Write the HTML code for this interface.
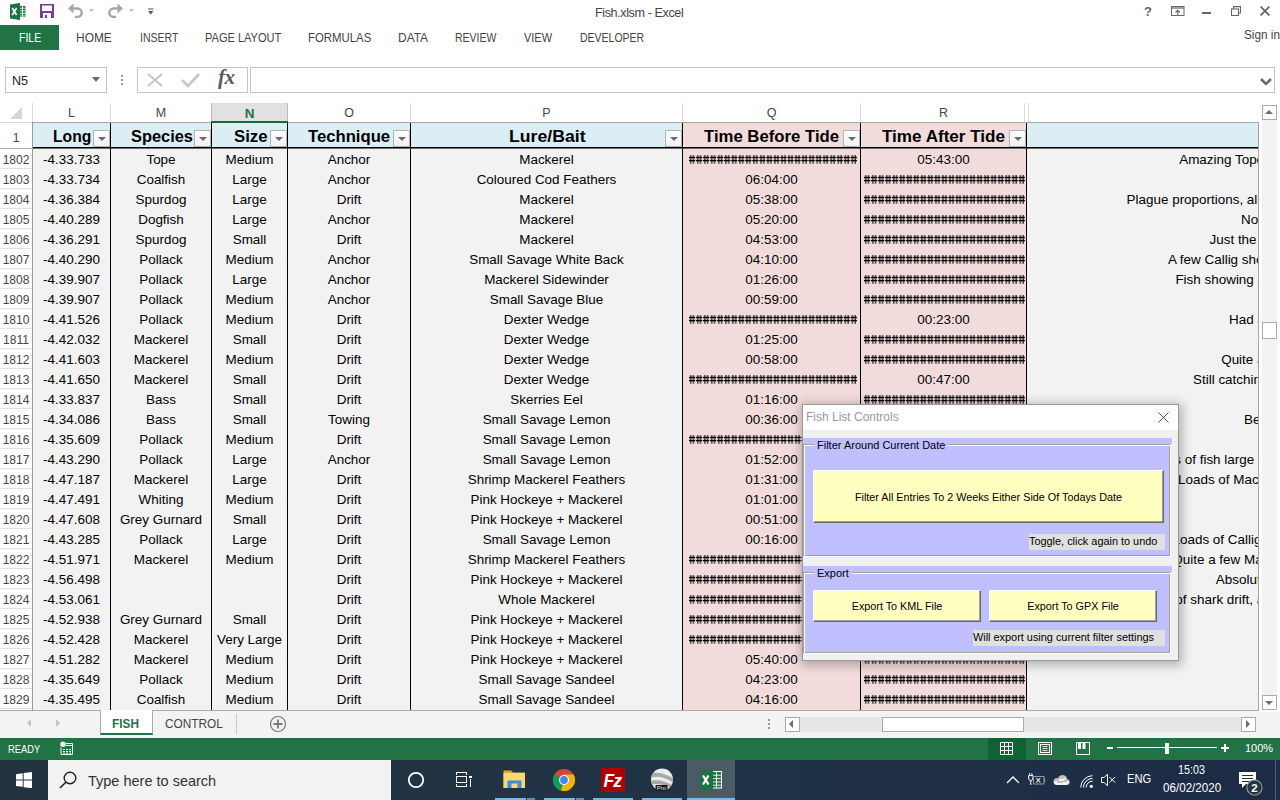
<!DOCTYPE html>
<html><head><meta charset="utf-8">
<style>
*{margin:0;padding:0;box-sizing:border-box}
html,body{width:1280px;height:800px;overflow:hidden;background:#fff;font-family:"Liberation Sans",sans-serif;position:relative}
.a{position:absolute}
/* title bar */
.tt{position:absolute;top:5.5px;left:595px;font-size:12.6px;letter-spacing:-0.4px;color:#444;white-space:nowrap}
.tab{position:absolute;top:31px;font-size:12.2px;color:#444;white-space:nowrap;transform-origin:0 0}
/* grid */
.rh{position:absolute;left:0;width:32px;height:20px;border-bottom:1px solid #e1e1e1;font-size:12px;color:#444;text-align:center;line-height:23px}
.c{position:absolute;height:20px;line-height:22px;font-size:13.45px;color:#000;text-align:center;white-space:nowrap;overflow:hidden}
.c.hash{font-size:13.45px;letter-spacing:-1.5px}
.c.s{left:1027px;width:231px;text-align:left}
.vb{position:absolute;top:123px;height:587px;width:1px;background:#000}
.hd{position:absolute;top:125px;height:24px;line-height:24px;font-weight:bold;font-size:16px;transform-origin:0 0;color:#000;white-space:nowrap}
.fb{position:absolute;top:130px;width:17px;height:17px;border:1px solid #b4b4b8;background:linear-gradient(#fdfdfd,#f0f0f4)}
.fb:after{content:"";position:absolute;left:4px;top:6px;border-left:4px solid transparent;border-right:4px solid transparent;border-top:4.5px solid #6b6b6b}
.ch{position:absolute;top:104px;height:19px;line-height:19px;font-size:12.5px;color:#444;text-align:center}
.cs{position:absolute;top:103px;height:19px;width:1px;background:#dcdcdc}
/* dialog */
.dlg{position:absolute;left:802px;top:404px;width:377px;height:257px;background:#f0f0f0;border:1px solid #9a9a9a;box-shadow:1px 2px 10px 2px rgba(0,0,0,0.28)}
.frame{position:absolute;background:#c0c0ff}
.gb{position:absolute;border-top:1px solid #a0a0a0;border-left:1px solid #a0a0a0;border-right:1px solid #fff;border-bottom:1px solid #fff;box-shadow:inset 1px 1px 0 #fff, inset -1px -1px 0 #a0a0a0}
.gl{position:absolute;background:#c0c0ff;font-size:11px;color:#000;padding:0 3px;line-height:13px}
.btn{position:absolute;background:#ffffc0;border-top:1px solid #fff;border-left:1px solid #fff;border-right:1px solid #696969;border-bottom:1px solid #696969;box-shadow:inset -1px -1px 0 #a0a0a0;font-size:10.8px;color:#000;text-align:center;white-space:nowrap}
.lbl{position:absolute;background:#e0e0e0;font-size:10.9px;color:#000;white-space:nowrap;line-height:15px}
</style></head><body>
<svg width="0" height="0" style="position:absolute"><defs><pattern id="hp" patternUnits="userSpaceOnUse" width="7.03" height="9"><rect x="0" y="1.8" width="6.3" height="1.4" fill="#000"/><rect x="0" y="4.9" width="6.3" height="1.4" fill="#000"/><rect x="1.2" y="0" width="1" height="8.8" fill="#000"/><rect x="4" y="0" width="1" height="8.8" fill="#000"/></pattern></defs></svg>

<!-- ===== TITLE BAR ===== -->
<svg class="a" style="left:10px;top:3px" width="17" height="17" viewBox="0 0 17 17">
  <rect x="9.5" y="2.5" width="6.5" height="12" fill="#1e7145" stroke="#fff" stroke-width="0.9"/>
  <path d="M10 5.2h6M10 7.8h6M10 10.4h6M10 13h6M12.5 3v11.5" stroke="#fff" stroke-width="0.8"/>
  <path d="M0 1.5 L10 0 L10 17 L0 15.5 Z" fill="#1e7145"/>
  <path d="M2.2 5 L6.6 12 M6.6 5 L2.2 12" stroke="#fff" stroke-width="1.7"/>
</svg>
<svg class="a" style="left:40px;top:4px" width="14" height="14" viewBox="0 0 14 14">
  <path d="M0 0 H14 V14 H0 Z" fill="#7d3c98"/>
  <rect x="2" y="1.5" width="10" height="5.5" fill="#fff"/>
  <rect x="3" y="9" width="8" height="5" fill="#fff"/>
  <rect x="5" y="11" width="2" height="3" fill="#7d3c98"/>
</svg>
<svg class="a" style="left:68px;top:3px" width="30" height="16" viewBox="0 0 30 16">
  <path d="M4 5.5 H9.5 A4.2 4.2 0 0 1 9.5 13.9 H7" fill="none" stroke="#a6a6ab" stroke-width="2.4"/>
  <path d="M0 5.5 L5.5 0.5 L5.5 10.5 Z" fill="#a6a6ab"/>
  <path d="M21 6 L26 6 L23.5 9 Z" fill="#c0c0c4"/>
</svg>
<svg class="a" style="left:108px;top:3px" width="30" height="16" viewBox="0 0 30 16">
  <path d="M11 5.5 H5.5 A4.2 4.2 0 0 0 5.5 13.9 H8" fill="none" stroke="#a6a6ab" stroke-width="2.4"/>
  <path d="M15 5.5 L9.5 0.5 L9.5 10.5 Z" fill="#a6a6ab"/>
  <path d="M21 6 L26 6 L23.5 9 Z" fill="#c0c0c4"/>
</svg>
<svg class="a" style="left:148px;top:8px" width="8" height="8" viewBox="0 0 8 8">
  <rect x="0" y="0.5" width="5.5" height="1" fill="#555"/>
  <path d="M0 3 L5.5 3 L2.75 6.5 Z" fill="#555"/>
</svg>
<div class="tt">Fish.xlsm - Excel</div>
<div class="a" style="left:1144px;top:4px;font-size:13px;font-weight:bold;color:#666">?</div>
<svg class="a" style="left:1171px;top:6px" width="14" height="10" viewBox="0 0 14 10">
  <rect x="0.5" y="0.5" width="12.5" height="9" fill="none" stroke="#666"/>
  <path d="M0.5 2 H13" stroke="#666" stroke-width="1.2"/>
  <path d="M6.75 9 V4.5 M4.5 6.5 L6.75 4.2 L9 6.5" fill="none" stroke="#666" stroke-width="1.1"/>
</svg>
<div class="a" style="left:1202px;top:12px;width:9px;height:2px;background:#666"></div>
<svg class="a" style="left:1231px;top:6px" width="10" height="10" viewBox="0 0 10 10">
  <rect x="0.5" y="3" width="7" height="6.5" fill="none" stroke="#666" stroke-width="1.1"/>
  <path d="M2.5 3 V0.6 H9.5 V7 H7.5" fill="none" stroke="#666" stroke-width="1.1"/>
</svg>
<svg class="a" style="left:1260px;top:6px" width="10" height="10" viewBox="0 0 10 10">
  <path d="M0.6 0.6 L9.4 9.4 M9.4 0.6 L0.6 9.4" stroke="#666" stroke-width="1.8"/>
</svg>

<!-- ===== RIBBON TABS ===== -->
<div class="a" style="left:0;top:25px;width:59px;height:25px;background:#217346"></div>
<div class="a" style="left:19px;top:31px;color:#fff;font-size:12.2px;transform:scaleX(0.86);transform-origin:0 0">FILE</div>
<div class="tab" style="left:76px;transform:scaleX(0.98)">HOME</div>
<div class="tab" style="left:140px;transform:scaleX(0.863)">INSERT</div>
<div class="tab" style="left:205px;transform:scaleX(0.905)">PAGE LAYOUT</div>
<div class="tab" style="left:308px;transform:scaleX(0.935)">FORMULAS</div>
<div class="tab" style="left:398px;transform:scaleX(0.98)">DATA</div>
<div class="tab" style="left:455px;transform:scaleX(0.86)">REVIEW</div>
<div class="tab" style="left:523.5px;transform:scaleX(0.9)">VIEW</div>
<div class="tab" style="left:580px;transform:scaleX(0.861)">DEVELOPER</div>
<div class="a" style="left:1244px;top:28px;font-size:12.5px;color:#444;white-space:nowrap;transform:scaleX(0.94);transform-origin:0 0">Sign in</div>

<!-- ===== FORMULA BAR ===== -->
<div class="a" style="left:5px;top:67px;width:102px;height:26px;border:1px solid #c6c6c6;background:#fff"></div>
<div class="a" style="left:12px;top:74px;font-size:12.5px;color:#222">N5</div>
<div class="a" style="left:92px;top:77px;border-left:4px solid transparent;border-right:4px solid transparent;border-top:5px solid #6b6b6b"></div>
<div class="a" style="left:121px;top:75px;width:2px;height:2px;background:#999"></div>
<div class="a" style="left:121px;top:79px;width:2px;height:2px;background:#999"></div>
<div class="a" style="left:121px;top:83px;width:2px;height:2px;background:#999"></div>
<div class="a" style="left:137px;top:67px;width:111px;height:26px;border:1px solid #c6c6c6;background:#fff"></div>
<svg class="a" style="left:146px;top:72px" width="20" height="16" viewBox="0 0 20 16">
  <path d="M2 2 L16 14 M16 2 L2 14" stroke="#c8c8c8" stroke-width="2.2"/>
</svg>
<svg class="a" style="left:181px;top:72px" width="20" height="16" viewBox="0 0 20 16">
  <path d="M1 8 L7 14 L18 2" fill="none" stroke="#c8c8c8" stroke-width="2.6"/>
</svg>
<div class="a" style="left:218px;top:65px;font-family:'Liberation Serif',serif;font-style:italic;font-weight:bold;font-size:21px;color:#5a5a5a;letter-spacing:-0.5px">fx</div>
<div class="a" style="left:250px;top:67px;width:1025px;height:26px;border:1px solid #c6c6c6;background:#fff"></div>
<svg class="a" style="left:1260px;top:77.5px" width="12" height="9" viewBox="0 0 12 9">
  <path d="M1 1 L6 6 L11 1" fill="none" stroke="#6b6b6b" stroke-width="2.6"/>
</svg>

<!-- ===== COLUMN HEADERS ===== -->
<svg class="a" style="left:0;top:103px" width="33" height="20">
  <path d="M22 4 L22 16 L10 16 Z" fill="#d6d6d6"/>
</svg>
<div class="a" style="left:212px;top:103px;width:75px;height:19px;background:#e1e1e1"></div>
<div class="cs" style="left:32px"></div>
<div class="cs" style="left:110px"></div>
<div class="cs" style="left:211px;background:#bdbdbd"></div>
<div class="cs" style="left:287px;background:#bdbdbd"></div>
<div class="cs" style="left:410px"></div>
<div class="cs" style="left:682px"></div>
<div class="cs" style="left:860px"></div>
<div class="cs" style="left:1024px"></div>
<div class="cs" style="left:1028px"></div>
<div class="ch" style="left:33px;width:77px">L</div>
<div class="ch" style="left:111px;width:100px">M</div>
<div class="ch" style="left:212px;width:75px;color:#217346;font-weight:bold;font-size:13.5px">N</div>
<div class="ch" style="left:288px;width:122px">O</div>
<div class="ch" style="left:411px;width:271px">P</div>
<div class="ch" style="left:683px;width:177px">Q</div>
<div class="ch" style="left:861px;width:165px">R</div>
<div class="a" style="left:0;top:122px;width:32px;height:1px;background:#dadada"></div>
<div class="a" style="left:32px;top:122px;width:1227px;height:1px;background:#a6a6a6"></div>
<div class="a" style="left:211px;top:121px;width:77px;height:2px;background:#146c3a"></div>

<!-- ===== GRID ===== -->
<div class="a" style="left:0;top:123px;width:32px;height:587px;background:#fff"></div>
<div class="rh" style="top:123px;height:26px;line-height:30px;border-bottom:1px solid #ababab">1</div>
<div class="a" style="left:32px;top:122px;width:1px;height:588px;background:#9b9b9b"></div>
<div class="a" style="left:33px;top:123px;width:1225px;height:24px;background:#daeef3"></div>
<div class="a" style="left:683px;top:123px;width:343px;height:587px;background:#f2dcdb"></div>
<div class="a" style="left:33px;top:149px;width:650px;height:561px;background:#f2f2f2"></div>
<div class="a" style="left:1027px;top:149px;width:231px;height:561px;background:#f2f2f2"></div>
<div class="a" style="left:33px;top:147px;width:1225px;height:1px;background:#000"></div>
<div class="a" style="left:33px;top:148px;width:1225px;height:1px;background:#6a6a6a"></div>
<div class="a" style="left:1258px;top:123px;width:1px;height:587px;background:#a6a6a6"></div>
<div class="vb" style="left:110px"></div>
<div class="vb" style="left:211px"></div>
<div class="vb" style="left:287px"></div>
<div class="vb" style="left:410px"></div>
<div class="vb" style="left:682px"></div>
<div class="vb" style="left:860px"></div>
<div class="vb" style="left:1026px"></div>
<div class="hd" style="left:52.8px;transform:scaleX(0.98)">Long</div>
<div class="fb" style="left:93px"></div>
<div class="hd" style="left:130.5px;transform:scaleX(1.024)">Species</div>
<div class="fb" style="left:194px"></div>
<div class="hd" style="left:233.8px;transform:scaleX(1.048)">Size</div>
<div class="fb" style="left:270px"></div>
<div class="hd" style="left:307.9px;transform:scaleX(1.042)">Technique</div>
<div class="fb" style="left:393px"></div>
<div class="hd" style="left:509.3px;transform:scaleX(1.104)">Lure/Bait</div>
<div class="fb" style="left:665px"></div>
<div class="hd" style="left:704.0px;transform:scaleX(1.045)">Time Before Tide</div>
<div class="fb" style="left:843px"></div>
<div class="hd" style="left:881.6px;transform:scaleX(1.067)">Time After Tide</div>
<div class="fb" style="left:1009px"></div>
<div class="rh" style="top:149px">1802</div>
<div class="c" style="top:149px;left:33px;width:77px">-4.33.733</div>
<div class="c" style="top:149px;left:111px;width:100px">Tope</div>
<div class="c" style="top:149px;left:212px;width:75px">Medium</div>
<div class="c" style="top:149px;left:288px;width:122px">Anchor</div>
<div class="c" style="top:149px;left:411px;width:271px">Mackerel</div>
<svg class="a" style="left:688.6px;top:154.8px" width="168.0" height="9"><rect width="168.0" height="9" fill="url(#hp)"/></svg>
<div class="c" style="top:149px;left:861px;width:165px">05:43:00</div>
<div class="c s" style="top:149px"><span style="position:absolute;left:152.2px">Amazing Tope</span></div>
<div class="rh" style="top:169px">1803</div>
<div class="c" style="top:169px;left:33px;width:77px">-4.33.734</div>
<div class="c" style="top:169px;left:111px;width:100px">Coalfish</div>
<div class="c" style="top:169px;left:212px;width:75px">Large</div>
<div class="c" style="top:169px;left:288px;width:122px">Anchor</div>
<div class="c" style="top:169px;left:411px;width:271px">Coloured Cod Feathers</div>
<div class="c" style="top:169px;left:683px;width:177px">06:04:00</div>
<svg class="a" style="left:863.7px;top:174.8px" width="161.0" height="9"><rect width="161.0" height="9" fill="url(#hp)"/></svg>
<div class="rh" style="top:189px">1804</div>
<div class="c" style="top:189px;left:33px;width:77px">-4.36.384</div>
<div class="c" style="top:189px;left:111px;width:100px">Spurdog</div>
<div class="c" style="top:189px;left:212px;width:75px">Large</div>
<div class="c" style="top:189px;left:288px;width:122px">Drift</div>
<div class="c" style="top:189px;left:411px;width:271px">Mackerel</div>
<div class="c" style="top:189px;left:683px;width:177px">05:38:00</div>
<svg class="a" style="left:863.7px;top:194.8px" width="161.0" height="9"><rect width="161.0" height="9" fill="url(#hp)"/></svg>
<div class="c s" style="top:189px"><span style="position:absolute;left:99.6px">Plague proportions, all</span></div>
<div class="rh" style="top:209px">1805</div>
<div class="c" style="top:209px;left:33px;width:77px">-4.40.289</div>
<div class="c" style="top:209px;left:111px;width:100px">Dogfish</div>
<div class="c" style="top:209px;left:212px;width:75px">Large</div>
<div class="c" style="top:209px;left:288px;width:122px">Anchor</div>
<div class="c" style="top:209px;left:411px;width:271px">Mackerel</div>
<div class="c" style="top:209px;left:683px;width:177px">05:20:00</div>
<svg class="a" style="left:863.7px;top:214.8px" width="161.0" height="9"><rect width="161.0" height="9" fill="url(#hp)"/></svg>
<div class="c s" style="top:209px"><span style="position:absolute;left:214.1px">Not</span></div>
<div class="rh" style="top:229px">1806</div>
<div class="c" style="top:229px;left:33px;width:77px">-4.36.291</div>
<div class="c" style="top:229px;left:111px;width:100px">Spurdog</div>
<div class="c" style="top:229px;left:212px;width:75px">Small</div>
<div class="c" style="top:229px;left:288px;width:122px">Drift</div>
<div class="c" style="top:229px;left:411px;width:271px">Mackerel</div>
<div class="c" style="top:229px;left:683px;width:177px">04:53:00</div>
<svg class="a" style="left:863.7px;top:234.8px" width="161.0" height="9"><rect width="161.0" height="9" fill="url(#hp)"/></svg>
<div class="c s" style="top:229px"><span style="position:absolute;left:182.5px">Just the </span></div>
<div class="rh" style="top:249px">1807</div>
<div class="c" style="top:249px;left:33px;width:77px">-4.40.290</div>
<div class="c" style="top:249px;left:111px;width:100px">Pollack</div>
<div class="c" style="top:249px;left:212px;width:75px">Medium</div>
<div class="c" style="top:249px;left:288px;width:122px">Anchor</div>
<div class="c" style="top:249px;left:411px;width:271px">Small Savage White Back</div>
<div class="c" style="top:249px;left:683px;width:177px">04:10:00</div>
<svg class="a" style="left:863.7px;top:254.8px" width="161.0" height="9"><rect width="161.0" height="9" fill="url(#hp)"/></svg>
<div class="c s" style="top:249px"><span style="position:absolute;left:140.9px">A few Callig shoals</span></div>
<div class="rh" style="top:269px">1808</div>
<div class="c" style="top:269px;left:33px;width:77px">-4.39.907</div>
<div class="c" style="top:269px;left:111px;width:100px">Pollack</div>
<div class="c" style="top:269px;left:212px;width:75px">Large</div>
<div class="c" style="top:269px;left:288px;width:122px">Anchor</div>
<div class="c" style="top:269px;left:411px;width:271px">Mackerel Sidewinder</div>
<div class="c" style="top:269px;left:683px;width:177px">01:26:00</div>
<svg class="a" style="left:863.7px;top:274.8px" width="161.0" height="9"><rect width="161.0" height="9" fill="url(#hp)"/></svg>
<div class="c s" style="top:269px"><span style="position:absolute;left:148.4px">Fish showing </span></div>
<div class="rh" style="top:289px">1809</div>
<div class="c" style="top:289px;left:33px;width:77px">-4.39.907</div>
<div class="c" style="top:289px;left:111px;width:100px">Pollack</div>
<div class="c" style="top:289px;left:212px;width:75px">Medium</div>
<div class="c" style="top:289px;left:288px;width:122px">Anchor</div>
<div class="c" style="top:289px;left:411px;width:271px">Small Savage Blue</div>
<div class="c" style="top:289px;left:683px;width:177px">00:59:00</div>
<svg class="a" style="left:863.7px;top:294.8px" width="161.0" height="9"><rect width="161.0" height="9" fill="url(#hp)"/></svg>
<div class="rh" style="top:309px">1810</div>
<div class="c" style="top:309px;left:33px;width:77px">-4.41.526</div>
<div class="c" style="top:309px;left:111px;width:100px">Pollack</div>
<div class="c" style="top:309px;left:212px;width:75px">Medium</div>
<div class="c" style="top:309px;left:288px;width:122px">Drift</div>
<div class="c" style="top:309px;left:411px;width:271px">Dexter Wedge</div>
<svg class="a" style="left:688.6px;top:314.8px" width="168.0" height="9"><rect width="168.0" height="9" fill="url(#hp)"/></svg>
<div class="c" style="top:309px;left:861px;width:165px">00:23:00</div>
<div class="c s" style="top:309px"><span style="position:absolute;left:202.1px">Had a</span></div>
<div class="rh" style="top:329px">1811</div>
<div class="c" style="top:329px;left:33px;width:77px">-4.42.032</div>
<div class="c" style="top:329px;left:111px;width:100px">Mackerel</div>
<div class="c" style="top:329px;left:212px;width:75px">Small</div>
<div class="c" style="top:329px;left:288px;width:122px">Drift</div>
<div class="c" style="top:329px;left:411px;width:271px">Dexter Wedge</div>
<div class="c" style="top:329px;left:683px;width:177px">01:25:00</div>
<svg class="a" style="left:863.7px;top:334.8px" width="161.0" height="9"><rect width="161.0" height="9" fill="url(#hp)"/></svg>
<div class="rh" style="top:349px">1812</div>
<div class="c" style="top:349px;left:33px;width:77px">-4.41.603</div>
<div class="c" style="top:349px;left:111px;width:100px">Mackerel</div>
<div class="c" style="top:349px;left:212px;width:75px">Medium</div>
<div class="c" style="top:349px;left:288px;width:122px">Drift</div>
<div class="c" style="top:349px;left:411px;width:271px">Dexter Wedge</div>
<div class="c" style="top:349px;left:683px;width:177px">00:58:00</div>
<svg class="a" style="left:863.7px;top:354.8px" width="161.0" height="9"><rect width="161.0" height="9" fill="url(#hp)"/></svg>
<div class="c s" style="top:349px"><span style="position:absolute;left:194.2px">Quite a</span></div>
<div class="rh" style="top:369px">1813</div>
<div class="c" style="top:369px;left:33px;width:77px">-4.41.650</div>
<div class="c" style="top:369px;left:111px;width:100px">Mackerel</div>
<div class="c" style="top:369px;left:212px;width:75px">Small</div>
<div class="c" style="top:369px;left:288px;width:122px">Drift</div>
<div class="c" style="top:369px;left:411px;width:271px">Dexter Wedge</div>
<svg class="a" style="left:688.6px;top:374.8px" width="168.0" height="9"><rect width="168.0" height="9" fill="url(#hp)"/></svg>
<div class="c" style="top:369px;left:861px;width:165px">00:47:00</div>
<div class="c s" style="top:369px"><span style="position:absolute;left:166.0px">Still catching</span></div>
<div class="rh" style="top:389px">1814</div>
<div class="c" style="top:389px;left:33px;width:77px">-4.33.837</div>
<div class="c" style="top:389px;left:111px;width:100px">Bass</div>
<div class="c" style="top:389px;left:212px;width:75px">Small</div>
<div class="c" style="top:389px;left:288px;width:122px">Drift</div>
<div class="c" style="top:389px;left:411px;width:271px">Skerries Eel</div>
<div class="c" style="top:389px;left:683px;width:177px">01:16:00</div>
<svg class="a" style="left:863.7px;top:394.8px" width="161.0" height="9"><rect width="161.0" height="9" fill="url(#hp)"/></svg>
<div class="rh" style="top:409px">1815</div>
<div class="c" style="top:409px;left:33px;width:77px">-4.34.086</div>
<div class="c" style="top:409px;left:111px;width:100px">Bass</div>
<div class="c" style="top:409px;left:212px;width:75px">Small</div>
<div class="c" style="top:409px;left:288px;width:122px">Towing</div>
<div class="c" style="top:409px;left:411px;width:271px">Small Savage Lemon</div>
<div class="c" style="top:409px;left:683px;width:177px">00:36:00</div>
<div class="c s" style="top:409px"><span style="position:absolute;left:217.0px">Bes</span></div>
<div class="rh" style="top:429px">1816</div>
<div class="c" style="top:429px;left:33px;width:77px">-4.35.609</div>
<div class="c" style="top:429px;left:111px;width:100px">Pollack</div>
<div class="c" style="top:429px;left:212px;width:75px">Medium</div>
<div class="c" style="top:429px;left:288px;width:122px">Drift</div>
<div class="c" style="top:429px;left:411px;width:271px">Small Savage Lemon</div>
<svg class="a" style="left:688.6px;top:434.8px" width="168.0" height="9"><rect width="168.0" height="9" fill="url(#hp)"/></svg>
<div class="rh" style="top:449px">1817</div>
<div class="c" style="top:449px;left:33px;width:77px">-4.43.290</div>
<div class="c" style="top:449px;left:111px;width:100px">Pollack</div>
<div class="c" style="top:449px;left:212px;width:75px">Large</div>
<div class="c" style="top:449px;left:288px;width:122px">Anchor</div>
<div class="c" style="top:449px;left:411px;width:271px">Small Savage Lemon</div>
<div class="c" style="top:449px;left:683px;width:177px">01:52:00</div>
<div class="c s" style="top:449px"><span style="position:absolute;left:117.4px">Loads of fish large</span></div>
<div class="rh" style="top:469px">1818</div>
<div class="c" style="top:469px;left:33px;width:77px">-4.47.187</div>
<div class="c" style="top:469px;left:111px;width:100px">Mackerel</div>
<div class="c" style="top:469px;left:212px;width:75px">Large</div>
<div class="c" style="top:469px;left:288px;width:122px">Drift</div>
<div class="c" style="top:469px;left:411px;width:271px">Shrimp Mackerel Feathers</div>
<div class="c" style="top:469px;left:683px;width:177px">01:31:00</div>
<div class="c s" style="top:469px"><span style="position:absolute;left:151.0px">Loads of Mackerel</span></div>
<div class="rh" style="top:489px">1819</div>
<div class="c" style="top:489px;left:33px;width:77px">-4.47.491</div>
<div class="c" style="top:489px;left:111px;width:100px">Whiting</div>
<div class="c" style="top:489px;left:212px;width:75px">Medium</div>
<div class="c" style="top:489px;left:288px;width:122px">Drift</div>
<div class="c" style="top:489px;left:411px;width:271px">Pink Hockeye + Mackerel</div>
<div class="c" style="top:489px;left:683px;width:177px">01:01:00</div>
<div class="rh" style="top:509px">1820</div>
<div class="c" style="top:509px;left:33px;width:77px">-4.47.608</div>
<div class="c" style="top:509px;left:111px;width:100px">Grey Gurnard</div>
<div class="c" style="top:509px;left:212px;width:75px">Small</div>
<div class="c" style="top:509px;left:288px;width:122px">Drift</div>
<div class="c" style="top:509px;left:411px;width:271px">Pink Hockeye + Mackerel</div>
<div class="c" style="top:509px;left:683px;width:177px">00:51:00</div>
<div class="rh" style="top:529px">1821</div>
<div class="c" style="top:529px;left:33px;width:77px">-4.43.285</div>
<div class="c" style="top:529px;left:111px;width:100px">Pollack</div>
<div class="c" style="top:529px;left:212px;width:75px">Large</div>
<div class="c" style="top:529px;left:288px;width:122px">Drift</div>
<div class="c" style="top:529px;left:411px;width:271px">Small Savage Lemon</div>
<div class="c" style="top:529px;left:683px;width:177px">00:16:00</div>
<div class="c s" style="top:529px"><span style="position:absolute;left:145.5px">Loads of Calligs</span></div>
<div class="rh" style="top:549px">1822</div>
<div class="c" style="top:549px;left:33px;width:77px">-4.51.971</div>
<div class="c" style="top:549px;left:111px;width:100px">Mackerel</div>
<div class="c" style="top:549px;left:212px;width:75px">Medium</div>
<div class="c" style="top:549px;left:288px;width:122px">Drift</div>
<div class="c" style="top:549px;left:411px;width:271px">Shrimp Mackerel Feathers</div>
<svg class="a" style="left:688.6px;top:554.8px" width="168.0" height="9"><rect width="168.0" height="9" fill="url(#hp)"/></svg>
<div class="c s" style="top:549px"><span style="position:absolute;left:145.3px">Quite a few Mackerel</span></div>
<div class="rh" style="top:569px">1823</div>
<div class="c" style="top:569px;left:33px;width:77px">-4.56.498</div>
<div class="c" style="top:569px;left:288px;width:122px">Drift</div>
<div class="c" style="top:569px;left:411px;width:271px">Pink Hockeye + Mackerel</div>
<svg class="a" style="left:688.6px;top:574.8px" width="168.0" height="9"><rect width="168.0" height="9" fill="url(#hp)"/></svg>
<div class="c s" style="top:569px"><span style="position:absolute;left:188.8px">Absolutely</span></div>
<div class="rh" style="top:589px">1824</div>
<div class="c" style="top:589px;left:33px;width:77px">-4.53.061</div>
<div class="c" style="top:589px;left:288px;width:122px">Drift</div>
<div class="c" style="top:589px;left:411px;width:271px">Whole Mackerel</div>
<svg class="a" style="left:688.6px;top:594.8px" width="168.0" height="9"><rect width="168.0" height="9" fill="url(#hp)"/></svg>
<div class="c s" style="top:589px"><span style="position:absolute;left:119.2px">Lots of shark drift, and</span></div>
<div class="rh" style="top:609px">1825</div>
<div class="c" style="top:609px;left:33px;width:77px">-4.52.938</div>
<div class="c" style="top:609px;left:111px;width:100px">Grey Gurnard</div>
<div class="c" style="top:609px;left:212px;width:75px">Small</div>
<div class="c" style="top:609px;left:288px;width:122px">Drift</div>
<div class="c" style="top:609px;left:411px;width:271px">Pink Hockeye + Mackerel</div>
<svg class="a" style="left:688.6px;top:614.8px" width="168.0" height="9"><rect width="168.0" height="9" fill="url(#hp)"/></svg>
<div class="rh" style="top:629px">1826</div>
<div class="c" style="top:629px;left:33px;width:77px">-4.52.428</div>
<div class="c" style="top:629px;left:111px;width:100px">Mackerel</div>
<div class="c" style="top:629px;left:212px;width:75px">Very Large</div>
<div class="c" style="top:629px;left:288px;width:122px">Drift</div>
<div class="c" style="top:629px;left:411px;width:271px">Pink Hockeye + Mackerel</div>
<svg class="a" style="left:688.6px;top:634.8px" width="168.0" height="9"><rect width="168.0" height="9" fill="url(#hp)"/></svg>
<div class="rh" style="top:649px">1827</div>
<div class="c" style="top:649px;left:33px;width:77px">-4.51.282</div>
<div class="c" style="top:649px;left:111px;width:100px">Mackerel</div>
<div class="c" style="top:649px;left:212px;width:75px">Medium</div>
<div class="c" style="top:649px;left:288px;width:122px">Drift</div>
<div class="c" style="top:649px;left:411px;width:271px">Pink Hockeye + Mackerel</div>
<div class="c" style="top:649px;left:683px;width:177px">05:40:00</div>
<svg class="a" style="left:863.7px;top:654.8px" width="161.0" height="9"><rect width="161.0" height="9" fill="url(#hp)"/></svg>
<div class="rh" style="top:669px">1828</div>
<div class="c" style="top:669px;left:33px;width:77px">-4.35.649</div>
<div class="c" style="top:669px;left:111px;width:100px">Pollack</div>
<div class="c" style="top:669px;left:212px;width:75px">Medium</div>
<div class="c" style="top:669px;left:288px;width:122px">Drift</div>
<div class="c" style="top:669px;left:411px;width:271px">Small Savage Sandeel</div>
<div class="c" style="top:669px;left:683px;width:177px">04:23:00</div>
<svg class="a" style="left:863.7px;top:674.8px" width="161.0" height="9"><rect width="161.0" height="9" fill="url(#hp)"/></svg>
<div class="rh" style="top:689px">1829</div>
<div class="c" style="top:689px;left:33px;width:77px">-4.35.495</div>
<div class="c" style="top:689px;left:111px;width:100px">Coalfish</div>
<div class="c" style="top:689px;left:212px;width:75px">Medium</div>
<div class="c" style="top:689px;left:288px;width:122px">Drift</div>
<div class="c" style="top:689px;left:411px;width:271px">Small Savage Sandeel</div>
<div class="c" style="top:689px;left:683px;width:177px">04:16:00</div>
<svg class="a" style="left:863.7px;top:694.8px" width="161.0" height="9"><rect width="161.0" height="9" fill="url(#hp)"/></svg>

<!-- ===== SCROLLBARS ===== -->
<div class="a" style="left:1259px;top:103px;width:21px;height:607px;background:#fff"></div>
<div class="a" style="left:1262px;top:120px;width:15px;height:575px;background:#f2f2f2"></div>
<div class="a" style="left:1262px;top:105px;width:15px;height:15px;border:1px solid #ababab;background:#fff"></div>
<div class="a" style="left:1265px;top:110px;border-left:4.5px solid transparent;border-right:4.5px solid transparent;border-bottom:4px solid #6b6b6b"></div>
<div class="a" style="left:1262px;top:322px;width:15px;height:17px;border:1px solid #ababab;background:#fff"></div>
<div class="a" style="left:1262px;top:695px;width:15px;height:15px;border:1px solid #ababab;background:#fff"></div>
<div class="a" style="left:1265px;top:701px;border-left:4.5px solid transparent;border-right:4.5px solid transparent;border-top:4px solid #6b6b6b"></div>

<!-- ===== SHEET TABS ===== -->
<div class="a" style="left:0;top:710px;width:1280px;height:28px;background:#f3f3f3"></div>
<div class="a" style="left:0;top:710px;width:1259px;height:1px;background:#ababab"></div>
<div class="a" style="left:1259px;top:710px;width:21px;height:2px;background:#fff"></div>
<div class="a" style="left:27px;top:719px;border-top:4.5px solid transparent;border-bottom:4.5px solid transparent;border-right:4.5px solid #c4c4c4"></div>
<div class="a" style="left:56px;top:719px;border-top:4.5px solid transparent;border-bottom:4.5px solid transparent;border-left:4.5px solid #c4c4c4"></div>
<div class="a" style="left:100px;top:710px;width:53px;height:25px;background:#fff;border-left:1px solid #ababab;border-right:1px solid #ababab;border-bottom:2px solid #217346"></div>
<div class="a" style="left:112px;top:717px;font-size:11.85px;font-weight:bold;color:#217346">FISH</div>
<div class="a" style="left:165px;top:717px;font-size:11.85px;color:#444">CONTROL</div>
<div class="a" style="left:236px;top:714px;width:1px;height:20px;background:#c6c6c6"></div>
<svg class="a" style="left:269px;top:715px" width="18" height="18" viewBox="0 0 18 18">
  <circle cx="9" cy="9" r="7.5" fill="none" stroke="#777" stroke-width="1.2"/>
  <path d="M9 4.5 V13.5 M4.5 9 H13.5" stroke="#777" stroke-width="1.8"/>
</svg>
<div class="a" style="left:768px;top:719px;width:2px;height:2px;background:#999"></div>
<div class="a" style="left:768px;top:723px;width:2px;height:2px;background:#999"></div>
<div class="a" style="left:768px;top:727px;width:2px;height:2px;background:#999"></div>
<div class="a" style="left:785px;top:717px;width:471px;height:15px;background:#e6e6e6"></div>
<div class="a" style="left:785px;top:717px;width:15px;height:15px;border:1px solid #ababab;background:#fff"></div>
<div class="a" style="left:789px;top:720px;border-top:4.5px solid transparent;border-bottom:4.5px solid transparent;border-right:4.5px solid #6b6b6b"></div>
<div class="a" style="left:882px;top:717px;width:142px;height:15px;border:1px solid #ababab;background:#fff"></div>
<div class="a" style="left:1241px;top:717px;width:15px;height:15px;border:1px solid #ababab;background:#fff"></div>
<div class="a" style="left:1246px;top:720px;border-top:4.5px solid transparent;border-bottom:4.5px solid transparent;border-left:4.5px solid #6b6b6b"></div>

<!-- ===== STATUS BAR ===== -->
<div class="a" style="left:0;top:738px;width:1280px;height:22px;background:#217346"></div>
<div class="a" style="left:7.5px;top:742px;font-size:10.6px;color:#fff;line-height:14px;transform:scaleX(0.88);transform-origin:0 0">READY</div>
<svg class="a" style="left:60px;top:741px" width="14" height="15" viewBox="0 0 14 15">
  <path d="M6 2.5 H12.5 V13.5 H1 V6.5" fill="none" stroke="#fff" stroke-width="1"/>
  <path d="M6 4.5 H12.5" stroke="#fff" stroke-width="1"/>
  <path d="M3 8.5h2M6 8.5h2M9 8.5h2M3 10.5h2M6 10.5h2M9 10.5h2M3 12.2h2M6 12.2h2M9 12.2h2" stroke="#fff" stroke-width="1"/>
  <circle cx="3" cy="3.2" r="2.8" fill="#e8e8e8"/>
</svg>
<div class="a" style="left:988px;top:738px;width:38px;height:22px;background:#0e6233"></div>
<svg class="a" style="left:1000px;top:742px" width="13" height="13" viewBox="0 0 13 13">
  <path d="M0.5 0.5h12v12h-12z M4.5 0.5v12 M8.5 0.5v12 M0.5 4.5h12 M0.5 8.5h12" fill="none" stroke="#fff"/>
</svg>
<svg class="a" style="left:1038px;top:742px" width="14" height="13" viewBox="0 0 14 13">
  <rect x="0.5" y="0.5" width="13" height="12" fill="none" stroke="#fff"/>
  <rect x="2.5" y="2.5" width="9" height="8" fill="none" stroke="#fff"/>
  <path d="M4.5 4.5h5M4.5 6.5h5M4.5 8.5h5" stroke="#fff" stroke-width="0.8"/>
</svg>
<svg class="a" style="left:1076px;top:742px" width="14" height="13" viewBox="0 0 14 13">
  <path d="M0.5 0.5h13v12h-13z" fill="none" stroke="#fff"/>
  <rect x="2" y="1" width="3" height="6" fill="#fff"/>
  <rect x="6.5" y="1" width="3" height="6" fill="#fff"/>
</svg>
<div class="a" style="left:1107px;top:747px;width:6px;height:2px;background:#fff"></div>
<div class="a" style="left:1117px;top:747px;width:100px;height:1px;background:#fff"></div>
<div class="a" style="left:1165px;top:743px;width:4px;height:11px;background:#fff"></div>
<div class="a" style="left:1221px;top:747px;width:8px;height:2px;background:#fff"></div>
<div class="a" style="left:1224px;top:744px;width:2px;height:8px;background:#fff"></div>
<div class="a" style="left:1245px;top:741px;font-size:11px;color:#fff;line-height:14px">100%</div>

<!-- ===== TASKBAR ===== -->
<div class="a" style="left:0;top:760px;width:1280px;height:40px;background:linear-gradient(90deg,#22343f 0%,#203346 55%,#1d2b46 100%)"></div>
<svg class="a" style="left:16px;top:772px" width="16.3" height="16.3" viewBox="0 0 17 17">
  <path d="M0 2.3 L7 1.3 V7.8 H0 Z M8 1.1 L17 0 V7.8 H8 Z M0 8.8 H7 V15.5 L0 14.5 Z M8 8.8 H17 V17 L8 15.8 Z" fill="#fff"/>
</svg>
<div class="a" style="left:48px;top:760px;width:343px;height:40px;background:#f2f2f2"></div>
<svg class="a" style="left:59px;top:771px" width="18" height="18" viewBox="0 0 18 18">
  <circle cx="11" cy="7" r="5.8" fill="none" stroke="#222" stroke-width="1.4"/>
  <path d="M6.8 11.2 L1 17" stroke="#222" stroke-width="1.6"/>
</svg>
<div class="a" style="left:88px;top:772.5px;font-size:14.5px;color:#333">Type here to search</div>
<svg class="a" style="left:406px;top:770px" width="20" height="20" viewBox="0 0 20 20">
  <circle cx="10" cy="10" r="7.2" fill="none" stroke="#fff" stroke-width="1.8"/>
</svg>
<svg class="a" style="left:455px;top:771px" width="18" height="17" viewBox="0 0 18 17" shape-rendering="crispEdges">
  <rect x="1" y="1" width="11" height="1" fill="#fff"/><rect x="1" y="1" width="1" height="3" fill="#fff"/><rect x="11" y="1" width="1" height="3" fill="#fff"/>
  <rect x="1" y="5" width="11" height="1" fill="#fff"/><rect x="1" y="11" width="11" height="1" fill="#fff"/><rect x="1" y="5" width="1" height="7" fill="#fff"/><rect x="11" y="5" width="1" height="7" fill="#fff"/>
  <rect x="1" y="15" width="11" height="1" fill="#fff"/><rect x="1" y="13" width="1" height="3" fill="#fff"/><rect x="11" y="13" width="1" height="3" fill="#fff"/>
  <rect x="14" y="5" width="3" height="2" fill="#fff"/><rect x="15" y="8" width="1" height="8" fill="#fff"/>
</svg>
<svg class="a" style="left:503px;top:770px" width="23" height="19" viewBox="0 0 23 19">
  <path d="M0.5 0.5 H8 L10 2.5 H22 V18 H0.5 Z" fill="#e8a628"/>
  <rect x="0.5" y="3" width="21.5" height="15" fill="#f8d775"/>
  <path d="M4.5 18 V10.5 H18.5 V18 H14.5 V13.5 H8.5 V18 Z" fill="#3d8ee0"/>
</svg>
<div class="a" style="left:495px;top:798px;width:31px;height:2px;background:#76b9ed"></div>
<div class="a" style="left:527px;top:798px;width:8px;height:2px;background:#5a8fc0"></div>
<svg class="a" style="left:553px;top:769px" width="22" height="22" viewBox="0 0 22 22">
  <circle cx="11" cy="11" r="11" fill="#db4437"/>
  <path d="M11 11 L1.5 5.5 A11 11 0 0 0 8 21.6 Z" fill="#0f9d58"/>
  <path d="M11 11 L8 21.6 A11 11 0 0 0 20.5 5.5 L11 5.5 Z" fill="#f4b400"/>
  <circle cx="11" cy="11" r="5" fill="#fff"/>
  <circle cx="11" cy="11" r="3.9" fill="#4285f4"/>
</svg>
<div class="a" style="left:544px;top:798px;width:31px;height:2px;background:#76b9ed"></div>
<div class="a" style="left:576px;top:798px;width:8px;height:2px;background:#5a8fc0"></div>
<svg class="a" style="left:601px;top:768px" width="24" height="24" viewBox="0 0 24 24">
  <rect x="0" y="0" width="24" height="24" fill="#ad0000"/>
  <text x="2.5" y="19" font-family="Liberation Sans" font-weight="bold" font-style="italic" font-size="17.5" fill="#fff" letter-spacing="-1">Fz</text>
</svg>
<div class="a" style="left:593px;top:798px;width:40px;height:2px;background:#76b9ed"></div>
<svg class="a" style="left:650px;top:768px" width="24" height="24" viewBox="0 0 24 24">
  <defs><clipPath id="ec"><circle cx="12" cy="11.6" r="11"/></clipPath></defs>
  <circle cx="12" cy="11.6" r="11" fill="#ececec"/>
  <g clip-path="url(#ec)">
    <path d="M0 5.5 Q10 2.5 24 10.5 L24 15 Q12 6.5 0 9.5 Z" fill="#a9a9a9"/>
    <path d="M0 13 Q12 10 24 18.5 L24 22 Q12 14.5 0 16.5 Z" fill="#a9a9a9"/>
  </g>
  <rect x="5.5" y="17" width="12" height="6" fill="#1b1b1b"/>
  <text x="11.5" y="22.3" font-size="6" fill="#e0e0e0" text-anchor="middle" font-family="Liberation Sans">Pro</text>
</svg>
<div class="a" style="left:642px;top:798px;width:40px;height:2px;background:#76b9ed"></div>
<div class="a" style="left:687px;top:760px;width:48px;height:38px;background:#4b5b66"></div>
<svg class="a" style="left:700px;top:769px" width="23" height="23" viewBox="0 0 23 23">
  <rect x="12.5" y="2.5" width="9" height="16.5" fill="#1e7145" stroke="#fff" stroke-width="1"/>
  <path d="M13 6.2h8M13 9.6h8M13 13h8M13 16.2h8M16.5 3v15.5" stroke="#fff" stroke-width="0.9"/>
  <path d="M0 2 L13 0 L13 22 L0 20 Z" fill="#1e7145"/>
  <path d="M3 6.5 L8.5 15.5 M8.5 6.5 L3 15.5" stroke="#fff" stroke-width="2.2"/>
</svg>
<div class="a" style="left:687px;top:798px;width:48px;height:2px;background:#76b9ed"></div>
<!-- tray -->
<svg class="a" style="left:1006px;top:775px" width="14" height="9" viewBox="0 0 14 9">
  <path d="M1 8 L7 2 L13 8" fill="none" stroke="#fff" stroke-width="1.3"/>
</svg>
<svg class="a" style="left:1028px;top:773px" width="18" height="13" viewBox="0 0 18 13">
  <path d="M1.7 0 V2.5 M3.9 0 V2.5" stroke="#fff" stroke-width="0.9"/>
  <path d="M0.6 2.6 H5 V5 Q5 7.3 2.8 7.6 Q0.6 7.3 0.6 5 Z" fill="none" stroke="#fff" stroke-width="1"/>
  <path d="M2.8 7.6 V12" stroke="#fff" stroke-width="1"/>
  <rect x="5.5" y="3.5" width="10.5" height="7.5" fill="none" stroke="#9a9a9a" stroke-width="1"/>
  <rect x="16" y="5.5" width="1.2" height="3.5" fill="#9a9a9a"/>
  <path d="M8.3 5 L12.3 9.5 M12.3 5 L8.3 9.5" stroke="#fff" stroke-width="1.1"/>
</svg>
<svg class="a" style="left:1053px;top:775px" width="17" height="10" viewBox="0 0 17 10">
  <defs><linearGradient id="cg" x1="0" y1="0" x2="0.3" y2="1"><stop offset="0" stop-color="#b0b0b0"/><stop offset="0.5" stop-color="#c8c8c8"/><stop offset="0.55" stop-color="#f2f2f2"/><stop offset="1" stop-color="#f2f2f2"/></linearGradient></defs>
  <g fill="url(#cg)">
    <circle cx="4" cy="6.5" r="3.5"/><circle cx="9.5" cy="4.5" r="4.5"/><circle cx="13.5" cy="7" r="3"/><rect x="4" y="6" width="9.5" height="4"/>
  </g>
</svg>
<svg class="a" style="left:1080px;top:775px" width="14" height="13" viewBox="0 0 14 13">
  <path d="M0.7 12.5 A12 12 0 0 1 12.5 0.7 M3.4 12.5 A9.2 9.2 0 0 1 12.5 3.4 M6.1 12.5 A6.5 6.5 0 0 1 12.5 6.1" fill="none" stroke="#fff" stroke-width="1"/>
  <circle cx="11.3" cy="11.3" r="1.6" fill="#fff"/>
</svg>
<svg class="a" style="left:1101px;top:773px" width="16" height="14" viewBox="0 0 16 14">
  <path d="M0.5 4.5 H3.2 L6.5 1 V13 L3.2 9.5 H0.5 Z" fill="none" stroke="#fff" stroke-width="1"/>
  <path d="M8.5 4 L14 9.5 M14 4 L8.5 9.5" stroke="#fff" stroke-width="1"/>
</svg>
<div class="a" style="left:1127px;top:772px;font-size:12.5px;color:#fff;transform:scaleX(0.89);transform-origin:0 0">ENG</div>
<div class="a" style="left:1178px;top:763px;font-size:12.5px;color:#fff;transform:scaleX(0.86);transform-origin:0 0">15:03</div>
<div class="a" style="left:1163px;top:781px;font-size:12.5px;color:#fff;transform:scaleX(0.93);transform-origin:0 0">06/02/2020</div>
<svg class="a" style="left:1238px;top:771px" width="30" height="26" viewBox="0 0 30 26">
  <path d="M1 1 H18 V13 H8 L4 17 V13 H1 Z" fill="#fff"/>
  <path d="M4 4.5 H15 M4 7.5 H15 M4 10.5 H12" stroke="#1f2e42" stroke-width="1"/>
  <circle cx="16.5" cy="16.6" r="7.6" fill="#23363f" stroke="#9a9a9a" stroke-width="1.1"/>
  <text x="16.5" y="20.8" font-size="11.5" font-weight="bold" fill="#fff" text-anchor="middle" font-family="Liberation Sans">2</text>
</svg>
<div class="a" style="left:1275px;top:760px;width:1px;height:40px;background:#56606e"></div>

<!-- ===== DIALOG ===== -->
<div class="dlg">
  <div class="a" style="left:0;top:0;width:375px;height:25px;background:#fff"></div>
  <div class="a" style="left:3px;top:5px;font-size:12px;color:#999">Fish List Controls</div>
  <svg class="a" style="left:355px;top:7px" width="11" height="11" viewBox="0 0 11 11">
    <path d="M0.5 0.5 L10.5 10.5 M10.5 0.5 L0.5 10.5" stroke="#555" stroke-width="1"/>
  </svg>
  <!-- frame 1 -->
  <div class="frame" style="left:0;top:33px;width:369px;height:6px"></div>
  <div class="frame" style="left:0;top:33px;width:368px;height:119px"></div>
  <div class="gb" style="left:0;top:39px;width:368px;height:113px"></div>
  <div class="gl" style="left:11px;top:34px">Filter Around Current Date</div>
  <div class="btn" style="left:10px;top:65px;width:351px;height:53px;line-height:53px">Filter All Entries To 2 Weeks Either Side Of Todays Date</div>
  <div class="lbl" style="left:226px;top:129px;width:136px;height:16px;padding-left:0">Toggle, click again to undo</div>
  <!-- frame 2 -->
  <div class="frame" style="left:0;top:161px;width:369px;height:6px"></div>
  <div class="frame" style="left:0;top:161px;width:368px;height:88px"></div>
  <div class="gb" style="left:0;top:167px;width:368px;height:82px"></div>
  <div class="gl" style="left:11px;top:162px">Export</div>
  <div class="btn" style="left:10px;top:185px;width:168px;height:32px;line-height:30px">Export To KML File</div>
  <div class="btn" style="left:186px;top:185px;width:168px;height:32px;line-height:30px">Export To GPX File</div>
  <div class="lbl" style="left:170px;top:225px;width:192px;height:16px">Will export using current filter settings</div>
</div>

</body></html>
